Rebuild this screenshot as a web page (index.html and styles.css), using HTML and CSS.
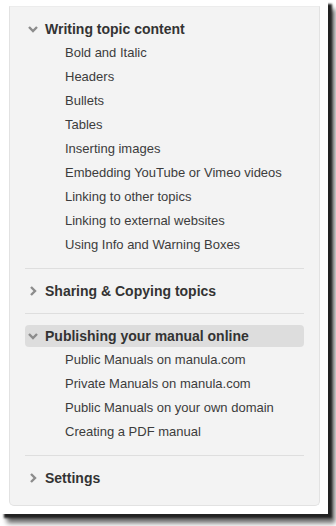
FILE: index.html
```html
<!DOCTYPE html>
<html lang="en">

<head>
    <meta charset="UTF-8">
    <meta name="viewport" content="width=device-width, initial-scale=1.0">
    <title>Manual Contents</title>
    <link rel="stylesheet" href="styles.css">
</head>

<body>
    <div class="frame">
        <div class="toc">

            <!-- Writing topic content (open) -->
            <div class="section">
                <div class="section-title">
                    <svg class="chevron" width="12" height="12" viewBox="0 0 12 12"><path d="M2 4 L6 8 L10 4" /></svg>
                    <span>Writing topic content</span>
                </div>
                <ul class="topic-list">
                    <li>Bold and Italic</li>
                    <li>Headers</li>
                    <li>Bullets</li>
                    <li>Tables</li>
                    <li>Inserting images</li>
                    <li>Embedding YouTube or Vimeo videos</li>
                    <li>Linking to other topics</li>
                    <li>Linking to external websites</li>
                    <li>Using Info and Warning Boxes</li>
                </ul>
            </div>

            <!-- Sharing (closed) -->
            <div class="section">
                <div class="section-title">
                    <svg class="chevron" width="12" height="12" viewBox="0 0 12 12"><path d="M4 2 L8 6 L4 10" /></svg>
                    <span>Sharing &amp; Copying topics</span>
                </div>
            </div>

            <!-- Publishing (open, selected) -->
            <div class="section">
                <div class="section-title active">
                    <svg class="chevron" width="12" height="12" viewBox="0 0 12 12"><path d="M2 4 L6 8 L10 4" /></svg>
                    <span>Publishing your manual online</span>
                </div>
                <ul class="topic-list">
                    <li>Public Manuals on manula.com</li>
                    <li>Private Manuals on manula.com</li>
                    <li>Public Manuals on your own domain</li>
                    <li>Creating a PDF manual</li>
                </ul>
            </div>

            <!-- Settings (closed) -->
            <div class="section last">
                <div class="section-title">
                    <svg class="chevron" width="12" height="12" viewBox="0 0 12 12"><path d="M4 2 L8 6 L4 10" /></svg>
                    <span>Settings</span>
                </div>
            </div>

        </div>
    </div>
</body>

</html>
```

FILE: styles.css
```css
/* Screenshot frame */
html,
body {
    height: 526px;
}

body {
    margin: 0;
    background-color: #fff;
    font-family: 'Liberation Sans', Arial, sans-serif;
    overflow: hidden;
}

.frame {
    width: 328px;
    height: 514px;
    background-color: #fff;
    box-shadow: 4px 4px 2px #222, 7px 9px 5px rgba(0, 0, 0, 0.6);
    padding: 6px 0 0 9px;
    box-sizing: border-box;
    overflow: hidden;
}

/* Table of contents panel */
.toc {
    width: 311px;
    box-sizing: border-box;
    background-color: #f3f3f3;
    border: 1px solid #e2e2e2;
    border-top-color: #ececec;
    border-radius: 0 0 5px 5px;
    padding: 0 15px 5px;
}

.section {
    padding: 11px 0;
    border-bottom: 1px solid #dedede;
}

.section.last {
    border-bottom: none;
}

.section-title {
    display: flex;
    align-items: center;
    height: 22px;
    padding-left: 2px;
    border-radius: 4px;
    font-size: 14px;
    font-weight: bold;
    color: #333;
}

.section-title.active {
    background-color: #dddddd;
}

.chevron {
    margin-right: 6px;
}

.chevron path {
    fill: none;
    stroke: #8c8c8c;
    stroke-width: 2.4;
}

.topic-list {
    list-style-type: none;
    margin: 0;
    padding: 1px 0 0 40px;
}

.topic-list li {
    height: 24px;
    line-height: 24px;
    font-size: 13px;
    color: #3c3c3c;
}
```
